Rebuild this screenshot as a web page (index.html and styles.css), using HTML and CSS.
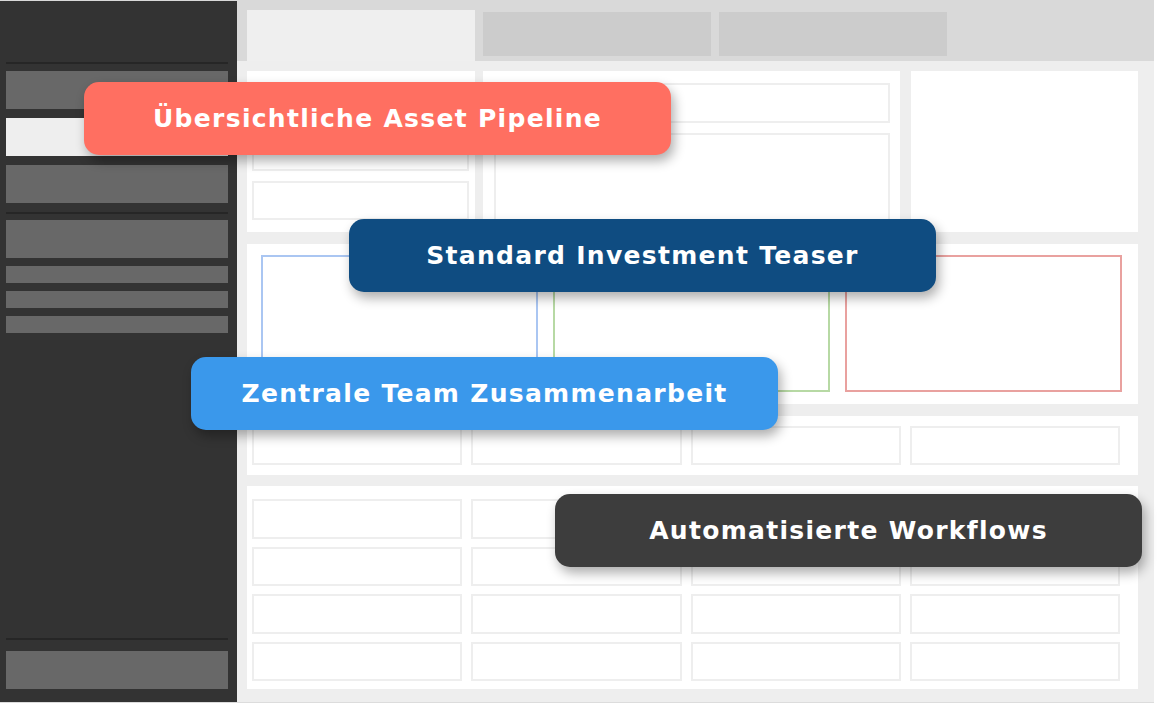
FILE: index.html
```html
<!DOCTYPE html>
<html lang="de">
<head>
<meta charset="utf-8">
<title>Asset Pipeline</title>
<link rel="stylesheet" href="styles.css">
</head>
<body>
<div class="app">
  <aside class="sidebar">
    <div class="sep sep-top"></div>
    <div class="nav nav-lg first"></div>
    <div class="nav nav-lg active"></div>
    <div class="nav nav-lg"></div>
    <div class="sep sep-mid"></div>
    <div class="nav nav-lg"></div>
    <div class="nav nav-sm"></div>
    <div class="nav nav-sm"></div>
    <div class="nav nav-sm"></div>
    <div class="spacer"></div>
    <div class="sep sep-bottom"></div>
    <div class="nav nav-lg bottom"></div>
  </aside>
  <main class="main">
    <div class="topbar">
      <div class="tab tab-active"></div>
      <div class="tab"></div>
      <div class="tab"></div>
    </div>
    <div class="content">
      <div class="row row-1">
        <div class="card card-a">
          <div class="box box-h40"></div>
          <div class="box box-h40"></div>
          <div class="box box-h40"></div>
        </div>
        <div class="card card-b">
          <div class="box box-h40"></div>
          <div class="box box-grow"></div>
        </div>
        <div class="card card-c"></div>
      </div>
      <div class="row row-2 card">
        <div class="cbox cbox-blue"></div>
        <div class="cbox cbox-green"></div>
        <div class="cbox cbox-red"></div>
      </div>
      <div class="row row-3 card grid4">
        <div class="box"></div><div class="box"></div><div class="box"></div><div class="box"></div>
      </div>
      <div class="row row-4 card grid4">
        <div class="box"></div><div class="box"></div><div class="box"></div><div class="box"></div>
        <div class="box"></div><div class="box"></div><div class="box"></div><div class="box"></div>
        <div class="box"></div><div class="box"></div><div class="box"></div><div class="box"></div>
        <div class="box"></div><div class="box"></div><div class="box"></div><div class="box"></div>
      </div>
    </div>
  </main>
  <div class="pill pill-coral">Übersichtliche Asset Pipeline</div>
  <div class="pill pill-navy">Standard Investment Teaser</div>
  <div class="pill pill-blue">Zentrale Team Zusammenarbeit</div>
  <div class="pill pill-dark">Automatisierte Workflows</div>
</div>
</body>
</html>
```

FILE: styles.css
```css
* { box-sizing: border-box; }
html, body { margin: 0; padding: 0; background: #ffffff; }
body { font-family: "DejaVu Sans", "Inter", sans-serif; }

.app {
  position: relative;
  display: flex;
  width: 1154px;
  height: 703px;
  border-top: 1px solid #d9d9d9;
  border-bottom: 1px solid #dcdcdc;
}

/* Sidebar */
.sidebar {
  width: 237px;
  background: #333333;
  display: flex;
  flex-direction: column;
  padding: 61px 9px 13px 6px;
}
.sep { height: 2px; background: #262626; flex: none; }
.nav { background: #686868; flex: none; }
.nav-lg { height: 38px; }
.nav-sm { height: 17px; margin-top: 8px; }
.nav.first { margin-top: 7px; }
.nav.active { background: #eeeeee; margin-top: 9px; }
.nav-lg + .nav-lg { margin-top: 9px; }
.sep-mid { margin-top: 9px; }
.sep-mid + .nav { margin-top: 6px; }
.spacer { flex: 1; }
.nav.bottom { margin-top: 11px; }

/* Main */
.main {
  flex: 1;
  background: #eeeeee;
  display: flex;
  flex-direction: column;
}
.topbar {
  height: 60px;
  background: #d9d9d9;
  display: flex;
  align-items: flex-start;
  gap: 8px;
  padding-left: 10px;
  flex: none;
}
.tab {
  width: 228px;
  height: 44px;
  margin-top: 11px;
  background: #cccccc;
}
.tab-active {
  height: 51px;
  margin-top: 9px;
  background: #efefef;
}

.content {
  flex: 1;
  display: flex;
  flex-direction: column;
  padding: 10px 16px 13px 10px;
}
.card { background: #ffffff; }
.row { flex: none; }

.row-1 {
  display: flex;
  height: 161px;
  gap: 8px;
}
.card-a {
  width: 228px;
  padding: 12px 6px 11px 5px;
  display: flex;
  flex-direction: column;
  gap: 10px;
}
.card-b {
  width: 417px;
  padding: 12px 10px 11px 11px;
  display: flex;
  flex-direction: column;
  gap: 10px;
}
.card-c { width: 227px; margin-left: 3px; }

.box {
  border: 2px solid #eeeeee;
  background: #ffffff;
}
.box-h40 { height: 40px; flex: none; }
.card-a .box-h40 { height: 39px; }
.box-grow { flex: 1; }

.row-2 {
  margin-top: 12px;
  height: 160px;
  display: flex;
  gap: 15px;
  padding: 11px 16px 12px 14px;
}
.cbox { flex: 1; border: 2px solid; }
.cbox-blue { border-color: #aac6f2; }
.cbox-green { border-color: #b7d9a4; }
.cbox-red { border-color: #e9a19f; }

.grid4 {
  display: grid;
  grid-template-columns: repeat(4, 1fr);
  column-gap: 9px;
  row-gap: 8px;
  padding-left: 5px;
  padding-right: 18px;
}
.row-3 {
  margin-top: 12px;
  height: 59px;
  padding-top: 10px;
  padding-bottom: 10px;
}
.row-4 {
  margin-top: 11px;
  flex: 1;
  padding-top: 13px;
  padding-bottom: 8px;
}

/* Callout pills (overlays) */
.pill {
  position: absolute;
  width: 587px;
  height: 73px;
  border-radius: 15px;
  display: flex;
  align-items: center;
  justify-content: center;
  color: #ffffff;
  font-family: "DejaVu Sans", "Inter", sans-serif;
  font-weight: 700;
  font-size: 25px;
  letter-spacing: 1.3px;
  box-shadow: 3px 6px 12px rgba(0, 0, 0, 0.32);
}
.pill-coral { left: 84px; top: 81px; background: #ff6f61; }
.pill-navy { left: 349px; top: 218px; background: #0f4c81; }
.pill-blue { left: 191px; top: 356px; background: #3a98eb; }
.pill-dark { left: 555px; top: 493px; background: #3d3d3d; }
```
